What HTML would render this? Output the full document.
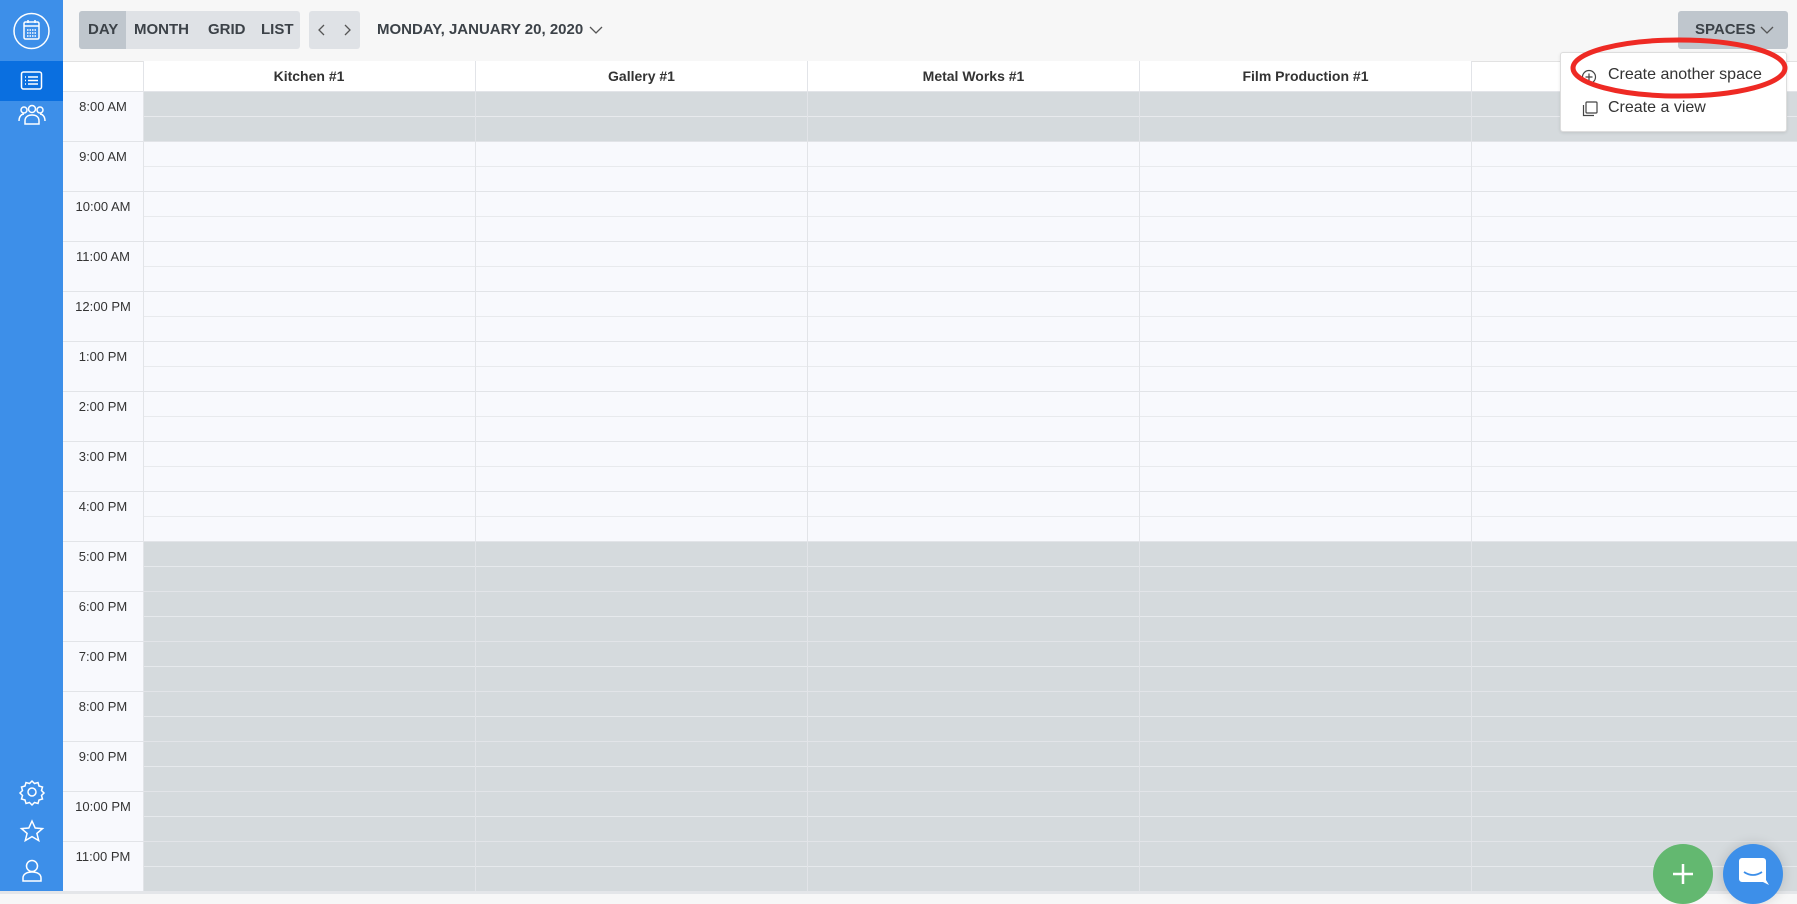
<!DOCTYPE html>
<html><head><meta charset="utf-8"><style>
*{box-sizing:border-box;margin:0;padding:0}
body{width:1797px;height:894px;overflow:hidden;background:#f7f7f7;font-family:"Liberation Sans",sans-serif;position:relative;color:#333}
.side{position:absolute;left:0;top:0;width:63px;height:894px;background:#3d8fe9}
.act{position:absolute;left:0;top:61px;width:63px;height:40px;background:#0a6fe0}
.abs{position:absolute}
.btn{position:absolute;top:11px;height:38px;background:#dfe2e6;border-radius:3px}
.bt{position:absolute;top:11px;height:38px;line-height:38px;font-size:15px;font-weight:bold;color:#3c4248}
.grid{position:absolute;left:63px;top:61px;width:1734px;height:830px;background:#fff;border-top:1px solid #e2e2e2}
.hdr{position:absolute;top:61px;height:30px;line-height:30px;text-align:center;font-size:14px;font-weight:600;color:#333;background:#fff}
.row{position:absolute;left:143px;width:1654px;height:50px}
.half{position:absolute;left:143px;width:1654px;height:1px;background:#e8eaed}
.hr{position:absolute;left:63px;width:1734px;height:1px;background:#e2e4e8}
.vl{position:absolute;top:61px;width:1px;height:830px;background:#e2e4e8}
.tl{position:absolute;left:63px;width:80px;text-align:center;font-size:13px;color:#333;margin-top:1px}
</style></head><body>
<div class="side"></div><div class="act"></div>
<svg class="abs" style="left:0;top:0" width="63" height="894" fill="none" stroke="#fff" stroke-width="1.5">
<circle cx="31.5" cy="31" r="17.5"/>
<rect x="24" y="22" width="15" height="17" rx="1.5"/><line x1="24" y1="26" x2="39" y2="26"/><line x1="28" y1="20" x2="28" y2="23"/><line x1="35" y1="20" x2="35" y2="23"/>
<path d="M27 30h9M27 33h9M27 36h9" stroke-dasharray="1.5 1"/>
<rect x="21.5" y="72" width="20" height="17" rx="2"/><path d="M25 77h1M28 77h10M25 80.5h1M28 80.5h10M25 84h1M28 84h10"/>
<circle cx="24" cy="110" r="3"/><circle cx="32" cy="109" r="3.5"/><circle cx="40" cy="110" r="3"/>
<path d="M19 121c0-5 3-7 5-7M45 121c0-5-3-7-5-7M25 124v-3c0-4 3-6 7-6s7 2 7 6v3z"/>
<circle cx="32" cy="792" r="4"/><path d="M32 781l2.5 2.5 3.5-1 1 3.5 3.5 1-1 3.5 2.5 2.5-2.5 2.5 1 3.5-3.5 1-1 3.5-3.5-1-2.5 2.5-2.5-2.5-3.5 1-1-3.5-3.5-1 1-3.5-2.5-2.5 2.5-2.5-1-3.5 3.5-1 1-3.5 3.5 1z"/>
<path d="M32 821l3.2 7 7.3.6-5.6 4.8 1.8 7.2-6.7-4-6.7 4 1.8-7.2-5.6-4.8 7.3-.6z"/>
<circle cx="32" cy="866" r="5.5"/><path d="M23 881v-3c0-4 4-6 9-6s9 2 9 6v3z"/>
</svg>
<div class="btn" style="left:79px;width:221px"></div>
<div class="btn" style="left:79px;width:47px;background:#bfc6cd;border-radius:3px 0 0 3px"></div>
<div class="bt" style="left:88px">DAY</div><div class="bt" style="left:134px">MONTH</div><div class="bt" style="left:208px">GRID</div><div class="bt" style="left:261px">LIST</div>
<div class="btn" style="left:309px;width:51px"></div>
<svg class="abs" style="left:309px;top:11px" width="51" height="38" fill="none" stroke="#555" stroke-width="1.3"><path d="M15 14l-5 5 5 5M36 14l5 5-5 5"/></svg>
<div class="bt" style="left:377px">MONDAY, JANUARY 20, 2020</div>
<svg class="abs" style="left:588px;top:24px" width="16" height="12" fill="none" stroke="#555" stroke-width="1.3"><path d="M2 3l6 6 6-6"/></svg>
<div class="grid"></div>
<div class="row" style="top:91px;background:#d5dadd"></div>
<div class="row" style="top:141px;height:400px;background:#f8f9fd"></div>
<div class="row" style="top:541px;height:350px;background:#d5dadd"></div>
<div class="abs" style="left:63px;top:91px;width:80px;height:800px;background:#f8f9fd"></div>
<div class="abs" style="left:0;top:891px;width:1797px;height:3px;background:#e4e6e9"></div>
<div class="half" style="top:116px"></div><div class="half" style="top:166px"></div><div class="half" style="top:216px"></div><div class="half" style="top:266px"></div><div class="half" style="top:316px"></div><div class="half" style="top:366px"></div><div class="half" style="top:416px"></div><div class="half" style="top:466px"></div><div class="half" style="top:516px"></div><div class="half" style="top:566px;background:#e6e9ec"></div><div class="half" style="top:616px;background:#e6e9ec"></div><div class="half" style="top:666px;background:#e6e9ec"></div><div class="half" style="top:716px;background:#e6e9ec"></div><div class="half" style="top:766px;background:#e6e9ec"></div><div class="half" style="top:816px;background:#e6e9ec"></div><div class="half" style="top:866px;background:#e6e9ec"></div>
<div class="hr" style="top:91px"></div><div class="hr" style="top:141px"></div><div class="hr" style="top:191px"></div><div class="hr" style="top:241px"></div><div class="hr" style="top:291px"></div><div class="hr" style="top:341px"></div><div class="hr" style="top:391px"></div><div class="hr" style="top:441px"></div><div class="hr" style="top:491px"></div><div class="hr" style="top:541px"></div><div class="hr" style="top:591px"></div><div class="hr" style="top:641px"></div><div class="hr" style="top:691px"></div><div class="hr" style="top:741px"></div><div class="hr" style="top:791px"></div><div class="hr" style="top:841px"></div>
<div class="hdr" style="left:143px;width:332px">Kitchen #1</div>
<div class="hdr" style="left:476px;width:331px">Gallery #1</div>
<div class="hdr" style="left:808px;width:331px">Metal Works #1</div>
<div class="hdr" style="left:1140px;width:331px">Film Production #1</div>
<div class="vl" style="left:143px"></div><div class="vl" style="left:475px"></div><div class="vl" style="left:807px"></div><div class="vl" style="left:1139px"></div><div class="vl" style="left:1471px"></div>
<div class="tl" style="top:98px">8:00 AM</div><div class="tl" style="top:148px">9:00 AM</div><div class="tl" style="top:198px">10:00 AM</div><div class="tl" style="top:248px">11:00 AM</div><div class="tl" style="top:298px">12:00 PM</div><div class="tl" style="top:348px">1:00 PM</div><div class="tl" style="top:398px">2:00 PM</div><div class="tl" style="top:448px">3:00 PM</div><div class="tl" style="top:498px">4:00 PM</div><div class="tl" style="top:548px">5:00 PM</div><div class="tl" style="top:598px">6:00 PM</div><div class="tl" style="top:648px">7:00 PM</div><div class="tl" style="top:698px">8:00 PM</div><div class="tl" style="top:748px">9:00 PM</div><div class="tl" style="top:798px">10:00 PM</div><div class="tl" style="top:848px">11:00 PM</div>
<div class="btn" style="left:1678px;width:110px;background:#bfc6cd"></div>
<div class="bt" style="left:1695px">SPACES</div>
<svg class="abs" style="left:1759px;top:24px" width="16" height="12" fill="none" stroke="#555" stroke-width="1.3"><path d="M2 3l6 6 6-6"/></svg>
<div class="abs" style="left:1560px;top:52px;width:227px;height:80px;background:#fff;border:1px solid #ddd;border-radius:3px;box-shadow:0 1px 3px rgba(0,0,0,.1)"></div>
<svg class="abs" style="left:1580px;top:66px" width="20" height="60" fill="none" stroke="#444" stroke-width="1.2"><circle cx="9" cy="11" r="6.5"/><path d="M9 7.5v7M5.5 11h7"/><rect x="6" y="36" width="11" height="11" rx="1"/><path d="M3.5 39v10.5h10.5"/></svg>
<div class="abs" style="left:1608px;top:66px;font-size:16px;color:#333">Create another space</div>
<div class="abs" style="left:1608px;top:99px;font-size:16px;color:#333">Create a view</div>
<svg class="abs" style="left:1565px;top:32px" width="232" height="74"><ellipse cx="114" cy="36" rx="106" ry="28" fill="none" stroke="#ee2a24" stroke-width="5"/></svg>
<div class="abs" style="left:1653px;top:844px;width:60px;height:60px;border-radius:50%;background:#63b870"></div>
<svg class="abs" style="left:1653px;top:844px" width="60" height="50" stroke="#fff" stroke-width="2.5"><path d="M30 20v20M20 30h20"/></svg>
<div class="abs" style="left:1723px;top:844px;width:60px;height:60px;border-radius:50%;background:#3d8fe9;box-shadow:0 0 12px rgba(0,0,0,.15)"></div>
<svg class="abs" style="left:1723px;top:844px" width="60" height="50"><path d="M16 17a3 3 0 0 1 3-3h21a3 3 0 0 1 3 3v19l3 5-6-3H19a3 3 0 0 1-3-3z" fill="#fff"/><path d="M21 28q9 6 18 0" fill="none" stroke="#3d8fe9" stroke-width="1.8"/></svg>
</body></html>
